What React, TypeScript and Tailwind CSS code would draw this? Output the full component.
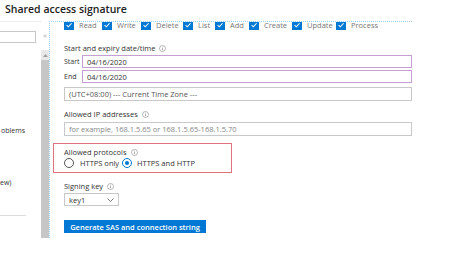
import React from 'react';

const Info = () => (
  <svg width="7" height="7" viewBox="0 0 14 14" className="inline-block ml-[4px] align-[-1px]">
    <circle cx="7" cy="7" r="6" fill="none" stroke="#8a8a8a" strokeWidth="1.2" />
    <line x1="7" y1="6" x2="7" y2="10.5" stroke="#8a8a8a" strokeWidth="1.4" />
    <circle cx="7" cy="4" r="0.9" fill="#8a8a8a" />
  </svg>
);

const Check = () => (
  <span className="w-[10px] h-[10px] bg-[#0078d4] flex items-center justify-center shrink-0">
    <svg width="8" height="8" viewBox="0 0 10 10">
      <polyline points="2,5.2 4.2,7.3 8.2,2.8" fill="none" stroke="white" strokeWidth="1.3" />
    </svg>
  </span>
);

const perms = [
  { label: 'Read', w: 'w-[38px]' },
  { label: 'Write', w: 'w-[39px]' },
  { label: 'Delete', w: 'w-[42px]' },
  { label: 'List', w: 'w-[32px]' },
  { label: 'Add', w: 'w-[34px]' },
  { label: 'Create', w: 'w-[43px]' },
  { label: 'Update', w: 'w-[44px]' },
  { label: 'Process', w: 'w-[44px]' },
];

export default function App() {
  return (
    <div className="w-[474px] h-[268px] bg-white overflow-hidden font-['Open_Sans',sans-serif] text-[#333]">
      <div className="h-[21px] pl-[5px] pt-[2px] text-[10.5px] leading-[14px] font-semibold text-[#222]">
        Shared access signature
      </div>
      <div className="flex h-[217px]">
        {/* left blade */}
        <div className="w-[41px] shrink-0 overflow-hidden border-t border-[#eee] text-[7px] leading-[9px] text-[#333]">
          <div className="mt-[9px] h-[12px] w-[36px] border border-[#c8c8c8] border-l-0"></div>
          <div className="mt-[83px] pl-[1px]">oblems</div>
          <div className="mt-[43px]">ew)</div>
          <div className="mt-[28px] h-px w-[26px] bg-[#ddd]"></div>
        </div>
        {/* collapse + scrollbar */}
        <div className="w-[8px] shrink-0 flex flex-col">
          <div className="h-[29px] pt-[10px] text-[8px] leading-[8px] text-[#aaa] text-center">«</div>
          <div className="flex-1 bg-[#c6c6c6] flex flex-col">
            <div className="h-[10px] bg-[#e8e8e8] flex items-center justify-center">
              <svg width="5" height="3" viewBox="0 0 10 6">
                <polygon points="5,0 10,6 0,6" fill="#a0a0a0" />
              </svg>
            </div>
          </div>
        </div>
        {/* main blade */}
        <div className="w-[363px] shrink-0 border-l border-t border-dotted border-[#9fd0f0] overflow-hidden pl-[14px] text-[7.5px] leading-[10px]">
          <div className="flex mt-[-2px] h-[10px] items-center text-[#777]">
            {perms.map((p) => (
              <div key={p.label} className={`${p.w} flex items-center gap-[5px] shrink-0`}>
                <Check />
                <span>{p.label}</span>
              </div>
            ))}
          </div>

          <div className="mt-[13px]">
            Start and expiry date/time
            <Info />
          </div>
          <div className="mt-[2px] flex items-center h-[13px]">
            <span className="w-[18px] text-[7px]">Start</span>
            <div className="flex-1 h-[13px] border border-[#c59ed4] pl-[4px] flex items-center">04/16/2020</div>
          </div>
          <div className="mt-[2px] flex items-center h-[13px]">
            <span className="w-[18px] text-[7px]">End</span>
            <div className="flex-1 h-[13px] border border-[#c59ed4] pl-[4px] flex items-center">04/16/2020</div>
          </div>
          <div className="mt-[4px] h-[14px] border border-[#c8c8c8] pl-[4px] flex items-center text-[#555]">
            (UTC+08:00) --- Current Time Zone ---
          </div>

          <div className="mt-[8px]">
            Allowed IP addresses
            <Info />
          </div>
          <div className="mt-[3px] h-[14px] border border-[#c8c8c8] pl-[4px] flex items-center text-[#888]">
            for example, 168.1.5.65 or 168.1.5.65-168.1.5.70
          </div>

          <div className="mt-[7px] ml-[-11px] w-[179px] h-[30px] border border-[#e0727f] pl-[10px] pt-[3px]">
            <div>
              Allowed protocols
              <Info />
            </div>
            <div className="flex items-center mt-[1px]">
              <span className="w-[10px] h-[10px] rounded-full border border-[#555] shrink-0"></span>
              <span className="ml-[6px] w-[42px]">HTTPS only</span>
              <span className="w-[10px] h-[10px] rounded-full border border-[#0078d4] shrink-0 flex items-center justify-center">
                <span className="w-[4px] h-[4px] rounded-full bg-[#0078d4]"></span>
              </span>
              <span className="ml-[5px]">HTTPS and HTTP</span>
            </div>
          </div>

          <div className="mt-[8px]">
            Signing key
            <Info />
          </div>
          <div className="mt-[2px] w-[55px] h-[13px] border border-[#c8c8c8] pl-[4px] pr-[4px] flex items-center justify-between">
            <span>key1</span>
            <svg width="7" height="4" viewBox="0 0 14 8">
              <polyline points="1,1 7,7 13,1" fill="none" stroke="#444" strokeWidth="1.4" />
            </svg>
          </div>

          <div className="mt-[14px] w-[142px] h-[13px] bg-[#0078d4] text-white font-semibold flex items-center justify-center">
            Generate SAS and connection string
          </div>
        </div>
      </div>
    </div>
  );
}
